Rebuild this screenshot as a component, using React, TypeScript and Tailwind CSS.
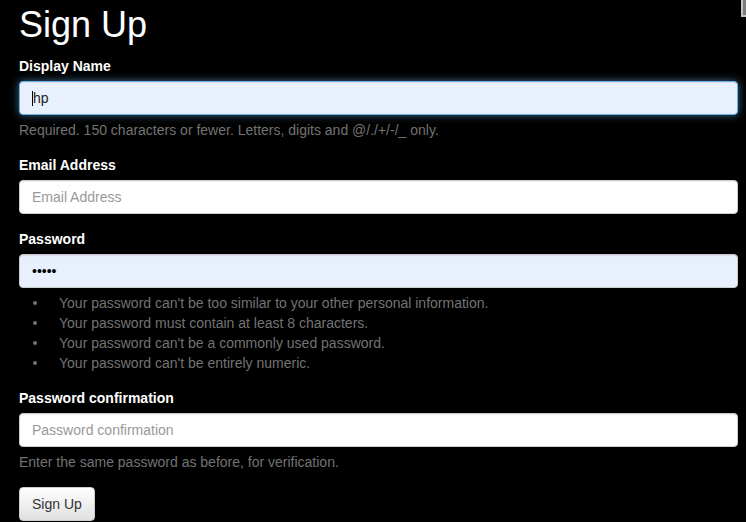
const font = { fontFamily: '"Liberation Sans", Arial, sans-serif' };

const inputBase =
  "block w-full h-[34px] rounded-[4px] border px-3 text-[14px] leading-[20px] outline-none";

const hints = [
  "Your password can't be too similar to your other personal information.",
  "Your password must contain at least 8 characters.",
  "Your password can't be a commonly used password.",
  "Your password can't be entirely numeric.",
];

const Label = ({ children }: { children: React.ReactNode }) => (
  <label className="block text-[14px] leading-[20px] font-bold text-white mb-[5px]">{children}</label>
);

const Help = ({ children }: { children: React.ReactNode }) => (
  <p className="mt-[5px] text-[14px] leading-[20px] text-[#737373]">{children}</p>
);

export default function App() {
  return (
    <div className="relative min-h-[522px] bg-black pl-[19px] pr-[8px] pt-[5px]" style={font}>
      {/* stray widget at the top-right edge */}
      <div className="absolute right-0 top-0 w-[5px] h-[17px] border-l-2 border-b-2 border-[#c4c4c4] bg-[#7d7d7d]" />

      <h1 className="text-[36px] leading-[40px] text-white font-normal">Sign Up</h1>

      <form className="mt-[11px]" onSubmit={(e) => e.preventDefault()}>
        <div>
          <Label>Display Name</Label>
          <div
            className={`${inputBase} flex items-center bg-[#e8f0fe] border-[#66afe9] text-[#222] shadow-[inset_0_1px_1px_rgba(0,0,0,0.075),0_0_8px_rgba(102,175,233,0.6)]`}
          >
            <span className="inline-block w-px h-[15px] bg-black" />
            <span>hp</span>
          </div>
          <Help>Required. 150 characters or fewer. Letters, digits and @/./+/-/_ only.</Help>
        </div>

        <div className="mt-[15px]">
          <Label>Email Address</Label>
          <input
            type="email"
            placeholder="Email Address"
            className={`${inputBase} bg-white border-[#ccc] text-[#555] placeholder:text-[#999] shadow-[inset_0_1px_1px_rgba(0,0,0,0.075)]`}
          />
        </div>

        <div className="mt-[15px]">
          <Label>Password</Label>
          <input
            type="password"
            defaultValue="hello"
            className={`${inputBase} bg-[#e8f0fe] border-[#ccc] text-black text-[12px] shadow-[inset_0_1px_1px_rgba(0,0,0,0.075)]`}
          />
          <ul className="mt-[5px] pl-[14px] text-[14px] leading-[20px] text-[#737373]">
            {hints.map((h) => (
              <li key={h} className="flex items-center">
                <span className="inline-block w-[4px] h-[4px] rounded-full bg-[#737373] mr-[22px] shrink-0" />
                <span>{h}</span>
              </li>
            ))}
          </ul>
        </div>

        <div className="mt-[15px]">
          <Label>Password confirmation</Label>
          <input
            type="password"
            placeholder="Password confirmation"
            className={`${inputBase} bg-white border-[#ccc] text-[#555] placeholder:text-[#999] shadow-[inset_0_1px_1px_rgba(0,0,0,0.075)]`}
          />
          <Help>Enter the same password as before, for verification.</Help>
        </div>

        <button
          type="submit"
          className="mt-[15px] h-[34px] px-3 rounded-[4px] border border-[#ccc] bg-gradient-to-b from-white to-[#e0e0e0] text-[14px] leading-[20px] text-[#333] shadow-[inset_0_1px_0_rgba(255,255,255,0.15),0_1px_1px_rgba(0,0,0,0.075)]"
        >
          Sign Up
        </button>
      </form>
    </div>
  );
}
